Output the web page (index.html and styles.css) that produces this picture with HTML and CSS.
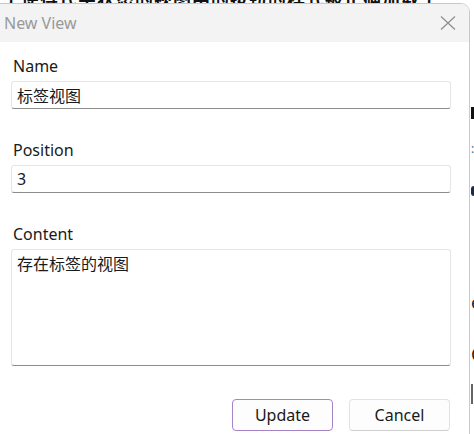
FILE: index.html
```html
<!DOCTYPE html>
<html lang="zh">
<head>
<meta charset="utf-8">
<title>New View</title>
<link rel="stylesheet" href="styles.css">
</head>
<body>
<div class="desktop">
  <div class="bg-top">了使得代字状态的视图中的按钮的样式被正确加载了</div>
  <div class="bg-side">
    <span class="bs-block"></span>
    <span class="bs-dots">:</span>
    <span class="bs-dot"></span>
    <span class="bs-e">e</span>
    <span class="bs-c">C</span>
    <span class="bs-bar"></span>
  </div>
  <div class="dialog">
    <div class="titlebar">
      <span class="title">New View</span>
      <span class="close" aria-label="Close">
        <svg width="16" height="16" viewBox="0 0 16 16"><path d="M1 1.5 L15 14.5 M15 1.5 L1 14.5" stroke="#8a8a8a" stroke-width="1.1" fill="none"/></svg>
      </span>
    </div>
    <div class="form">
      <div class="field">
        <label class="label">Name</label>
        <input class="input" type="text" value="标签视图">
      </div>
      <div class="field">
        <label class="label">Position</label>
        <input class="input" type="text" value="3">
      </div>
      <div class="field">
        <label class="label">Content</label>
        <textarea class="textarea">存在标签的视图</textarea>
      </div>
      <div class="actions">
        <button class="btn btn-primary">Update</button>
        <button class="btn">Cancel</button>
      </div>
    </div>
  </div>
</div>
</body>
</html>
```
FILE: styles.css
```css
* { box-sizing: border-box; }
html, body {
  margin: 0;
  padding: 0;
  width: 474px;
  height: 434px;
  overflow: hidden;
  background: #ffffff;
  font-family: "Noto Sans", "Noto Sans CJK SC", sans-serif;
}
.desktop {
  position: relative;
  width: 474px;
  height: 434px;
  overflow: hidden;
  background: #ffffff;
}
.bg-top {
  position: absolute;
  top: -15px;
  left: 2px;
  white-space: nowrap;
  font-size: 18px;
  font-weight: 700;
  color: #111;
  letter-spacing: 1px;
}
.bg-side {
  position: absolute;
  top: 0;
  left: 470px;
  width: 4px;
  height: 434px;
}
.bg-side span { position: absolute; left: 1px; }
.bs-block { top: 107px; width: 4px; height: 12px; background: #111; }
.bs-dots { top: 140px; font-size: 12px; color: #666; }
.bs-dot { top: 186px; width: 6px; height: 10px; border-radius: 3px; background: #1c2a44; }
.bs-e { top: 292px; font-size: 18px; color: #222; line-height: 20px; }
.bs-c { top: 344px; font-size: 18px; color: #222; line-height: 20px; }
.bs-bar { top: 384px; width: 2px; height: 20px; background: #666; }

.dialog {
  position: absolute;
  left: -1px;
  top: 3px;
  width: 471px;
  height: 460px;
  background: #ffffff;
  border: 1px solid #c9c9c9;
  border-radius: 0 9px 0 0;
  overflow: hidden;
}
.titlebar {
  height: 38px;
  background: #f3f3f3;
  display: flex;
  align-items: center;
  justify-content: space-between;
  padding: 0 13px 0 4px;
}
.title {
  font-size: 16px;
  color: #999999;
  line-height: 20px;
}
.close {
  display: flex;
  width: 16px;
  height: 16px;
}
.form {
  padding: 14px 18px 0 11px;
  display: flex;
  flex-direction: column;
  gap: 31px;
}
.field {
  display: flex;
  flex-direction: column;
}
.label {
  font-size: 16px;
  line-height: 20px;
  color: #1a1a1a;
  margin: 0 0 5px 2px;
}
.input, .textarea {
  width: 440px;
  font-family: "Noto Sans", "Noto Sans CJK SC", sans-serif;
  font-size: 16px;
  color: #1a1a1a;
  background: #ffffff;
  border: 1px solid #e6e6e6;
  border-bottom: 1px solid #8c8c8c;
  border-radius: 3px;
  outline: none;
  margin: 0;
}
.input {
  height: 28px;
  padding: 0 5px;
  line-height: 26px;
}
.textarea {
  height: 117px;
  padding: 3px 5px;
  line-height: 22px;
  resize: none;
}
.actions {
  display: flex;
  justify-content: flex-end;
  gap: 16px;
  padding-right: 1px;
  margin-top: 2px;
}
.btn {
  width: 101px;
  height: 32px;
  font-family: "Noto Sans", "Noto Sans CJK SC", sans-serif;
  font-size: 16px;
  color: #1a1a1a;
  background: #fdfdfd;
  border: 1px solid #e2e2e2;
  border-bottom-color: #cfcfcf;
  border-radius: 4px;
  padding: 0;
}
.btn-primary {
  border: 1px solid #a784c6;
}
```
